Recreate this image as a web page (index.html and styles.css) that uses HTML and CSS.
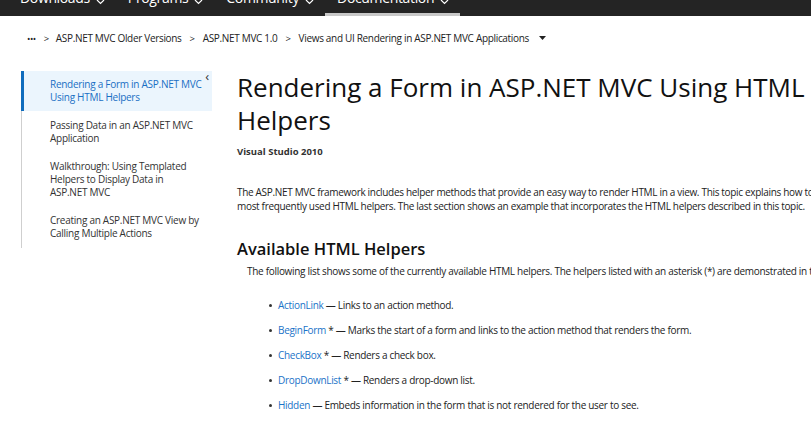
FILE: index.html
```html
<!DOCTYPE html>
<html>
<head>
<meta charset="utf-8">
<link rel="stylesheet" href="styles.css">
</head>
<body>
<div class="topnav">
  <div class="navrow">
    <span class="navitem">Downloads<svg class="chev" width="9" height="6" viewBox="0 0 9 6"><path d="M1 1l3.5 3.5L8 1" fill="none" stroke="#fff" stroke-width="1.2"/></svg></span>
    <span class="navitem">Programs<svg class="chev" width="9" height="6" viewBox="0 0 9 6"><path d="M1 1l3.5 3.5L8 1" fill="none" stroke="#fff" stroke-width="1.2"/></svg></span>
    <span class="navitem">Community<svg class="chev" width="9" height="6" viewBox="0 0 9 6"><path d="M1 1l3.5 3.5L8 1" fill="none" stroke="#fff" stroke-width="1.2"/></svg></span>
    <span class="navitem active">Documentation<svg class="chev" width="9" height="6" viewBox="0 0 9 6"><path d="M1 1l3.5 3.5L8 1" fill="none" stroke="#fff" stroke-width="1.2"/></svg></span>
  </div>
</div>
<div class="crumbs">
  <span class="dots">&bull;&bull;&bull;</span>
  <span class="sep">&gt;</span>
  <span>ASP.NET MVC Older Versions</span>
  <span class="sep">&gt;</span>
  <span>ASP.NET MVC 1.0</span>
  <span class="sep">&gt;</span>
  <span>Views and UI Rendering in ASP.NET MVC Applications</span>
  <svg class="caret" width="7" height="4" viewBox="0 0 7 4"><path d="M0 0h7L3.5 4z" fill="#222"/></svg>
</div>
<div class="page">
  <nav class="side">
    <div class="sitem selected">Rendering a Form in ASP.NET MVC Using HTML Helpers<span class="collapse">&lsaquo;</span></div>
    <div class="sitem">Passing Data in an ASP.NET MVC Application</div>
    <div class="sitem">Walkthrough: Using Templated Helpers to Display Data in ASP.NET MVC</div>
    <div class="sitem">Creating an ASP.NET MVC View by Calling Multiple Actions</div>
  </nav>
  <main class="main">
    <h1 class="title">Rendering a Form in ASP.NET MVC Using HTML<br>Helpers</h1>
    <div class="vs">Visual Studio 2010</div>
    <p class="intro">The ASP.NET MVC framework includes helper methods that provide an easy way to render HTML in a view. This topic explains how to work with some of the<br>most frequently used HTML helpers. The last section shows an example that incorporates the HTML helpers described in this topic.</p>
    <h2 class="h2">Available HTML Helpers</h2>
    <p class="lead">The following list shows some of the currently available HTML helpers. The helpers listed with an asterisk (*) are demonstrated in this document:</p>
    <ul class="list">
      <li><a>ActionLink</a> — Links to an action method.</li>
      <li><a>BeginForm</a> * — Marks the start of a form and links to the action method that renders the form.</li>
      <li><a>CheckBox</a> * — Renders a check box.</li>
      <li><a>DropDownList</a> * — Renders a drop-down list.</li>
      <li><a>Hidden</a> — Embeds information in the form that is not rendered for the user to see.</li>
      <li><a>ListBox</a> — Renders a list box.</li>
    </ul>
  </main>
</div>
</body>
</html>
```
FILE: styles.css
```css
html, body {
  margin: 0;
  padding: 0;
  width: 811px;
  height: 426px;
  overflow: hidden;
  background: #fff;
  font-family: "Open Sans", "Noto Sans", sans-serif;
  color: #222;
}
.topnav {
  height: 16px;
  background: #242424;
  overflow: hidden;
}
.navrow {
  display: flex;
  margin-top: -14px;
  padding-left: 8px;
}
.navitem {
  display: flex;
  align-items: center;
  color: #fff;
  font-size: 14px;
  letter-spacing: -0.35px;
  line-height: 24px;
  height: 24px;
  padding: 0 11px 0 12px;
  white-space: nowrap;
}
.navitem .chev {
  margin-left: 6px;
  margin-top: 8px;
}
.navitem.active {
  padding-bottom: 3px;
  border-bottom: 3px solid #c8c8c8;
}
.crumbs {
  display: flex;
  align-items: center;
  gap: 7px;
  height: 14px;
  margin: 15px 0 0 27px;
  font-size: 10px;
  letter-spacing: -0.32px;
  color: #222;
  white-space: nowrap;
}
.dots { font-size: 9px; letter-spacing: -0.5px; }
.sep { font-size: 9.5px; padding: 0 1px; }
.sep:nth-of-type(2) { padding-right: 0; }
.caret { margin-left: 3px; }
.page {
  display: flex;
  margin-top: 26px;
}
.side {
  width: 190px;
  flex: none;
  margin-left: 21px;
  border-left: 1px solid #cfcfcf;
  align-self: flex-start;
}
.sitem {
  position: relative;
  font-size: 10px;
  letter-spacing: -0.27px;
  line-height: 13px;
  padding: 7px 11px 7px 28px;
  margin-bottom: 1px;
  color: #333;
}
.sitem.selected {
  background: #ebf5fd;
  color: #1a6fc4;
  border-left: 3px solid #0f6cbd;
  margin-left: -1px;
  padding-left: 26px;
  padding-right: 4px;
  padding-bottom: 7px;
}
.collapse {
  position: absolute;
  right: 3px;
  top: -1px;
  font-size: 13px;
  color: #333;
}
.main {
  margin-left: 25px;
  white-space: nowrap;
}
.title {
  margin: 0;
  font-weight: 400;
  font-size: 26px;
  line-height: 33px;
  color: #111;
}
.vs {
  margin-top: 8px;
  font-size: 9.5px;
  font-weight: 700;
  color: #333;
}
.intro {
  margin: 27px 0 0;
  font-size: 10px;
  letter-spacing: -0.32px;
  line-height: 14px;
}
.h2 {
  margin: 24px 0 0;
  font-size: 16.5px;
  font-weight: 600;
  line-height: 24px;
  color: #111;
}
.lead {
  margin: 3px 0 0 10px;
  font-size: 10px;
  letter-spacing: -0.3px;
  line-height: 14px;
}
.list {
  list-style: none;
  margin: 20px 0 0;
  padding-left: 32px;
  font-size: 10px;
  letter-spacing: -0.3px;
  line-height: 14px;
}
.list li { margin-bottom: 11px; }
.list li::before {
  content: "";
  display: inline-block;
  width: 3px;
  height: 3px;
  border-radius: 50%;
  background: #333;
  vertical-align: middle;
  margin: 0 6px 1px 0;
}
.list a { color: #1a73c8; }
```
